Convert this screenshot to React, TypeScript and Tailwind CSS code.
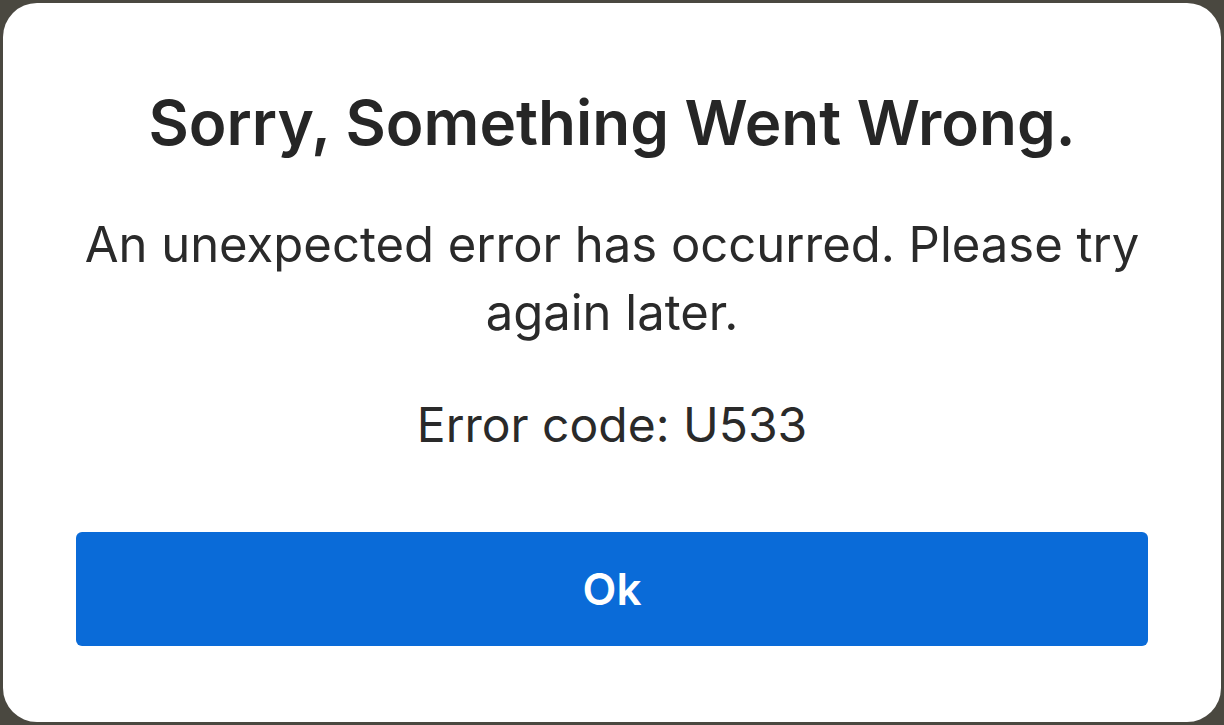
export default function App() {
  return (
    <div className="w-[1224px] h-[725px] bg-[#4a4840] p-[3px] box-border" style={{ fontFamily: "Inter, 'Noto Sans', sans-serif" }}>
      <div className="w-full h-full bg-white rounded-[34px] flex flex-col items-center px-[73px] box-border">
        <h1 className="mt-[84px] text-[62px] leading-[72px] font-semibold text-[#262626] text-center tracking-[0px]">
          Sorry, Something Went Wrong.
        </h1>
        <p className="mt-[52px] text-[49px] leading-[68px] text-[#2a2a2a] text-center">
          An unexpected error has occurred. Please try again later.
        </p>
        <p className="mt-[44px] text-[48px] leading-[68px] text-[#2a2a2a] text-center">
          Error code: U533
        </p>
        <button className="mt-[73px] w-full h-[114px] bg-[#0a6bd8] rounded-[6px] text-white text-[44px] font-semibold">
          Ok
        </button>
      </div>
    </div>
  );
}
